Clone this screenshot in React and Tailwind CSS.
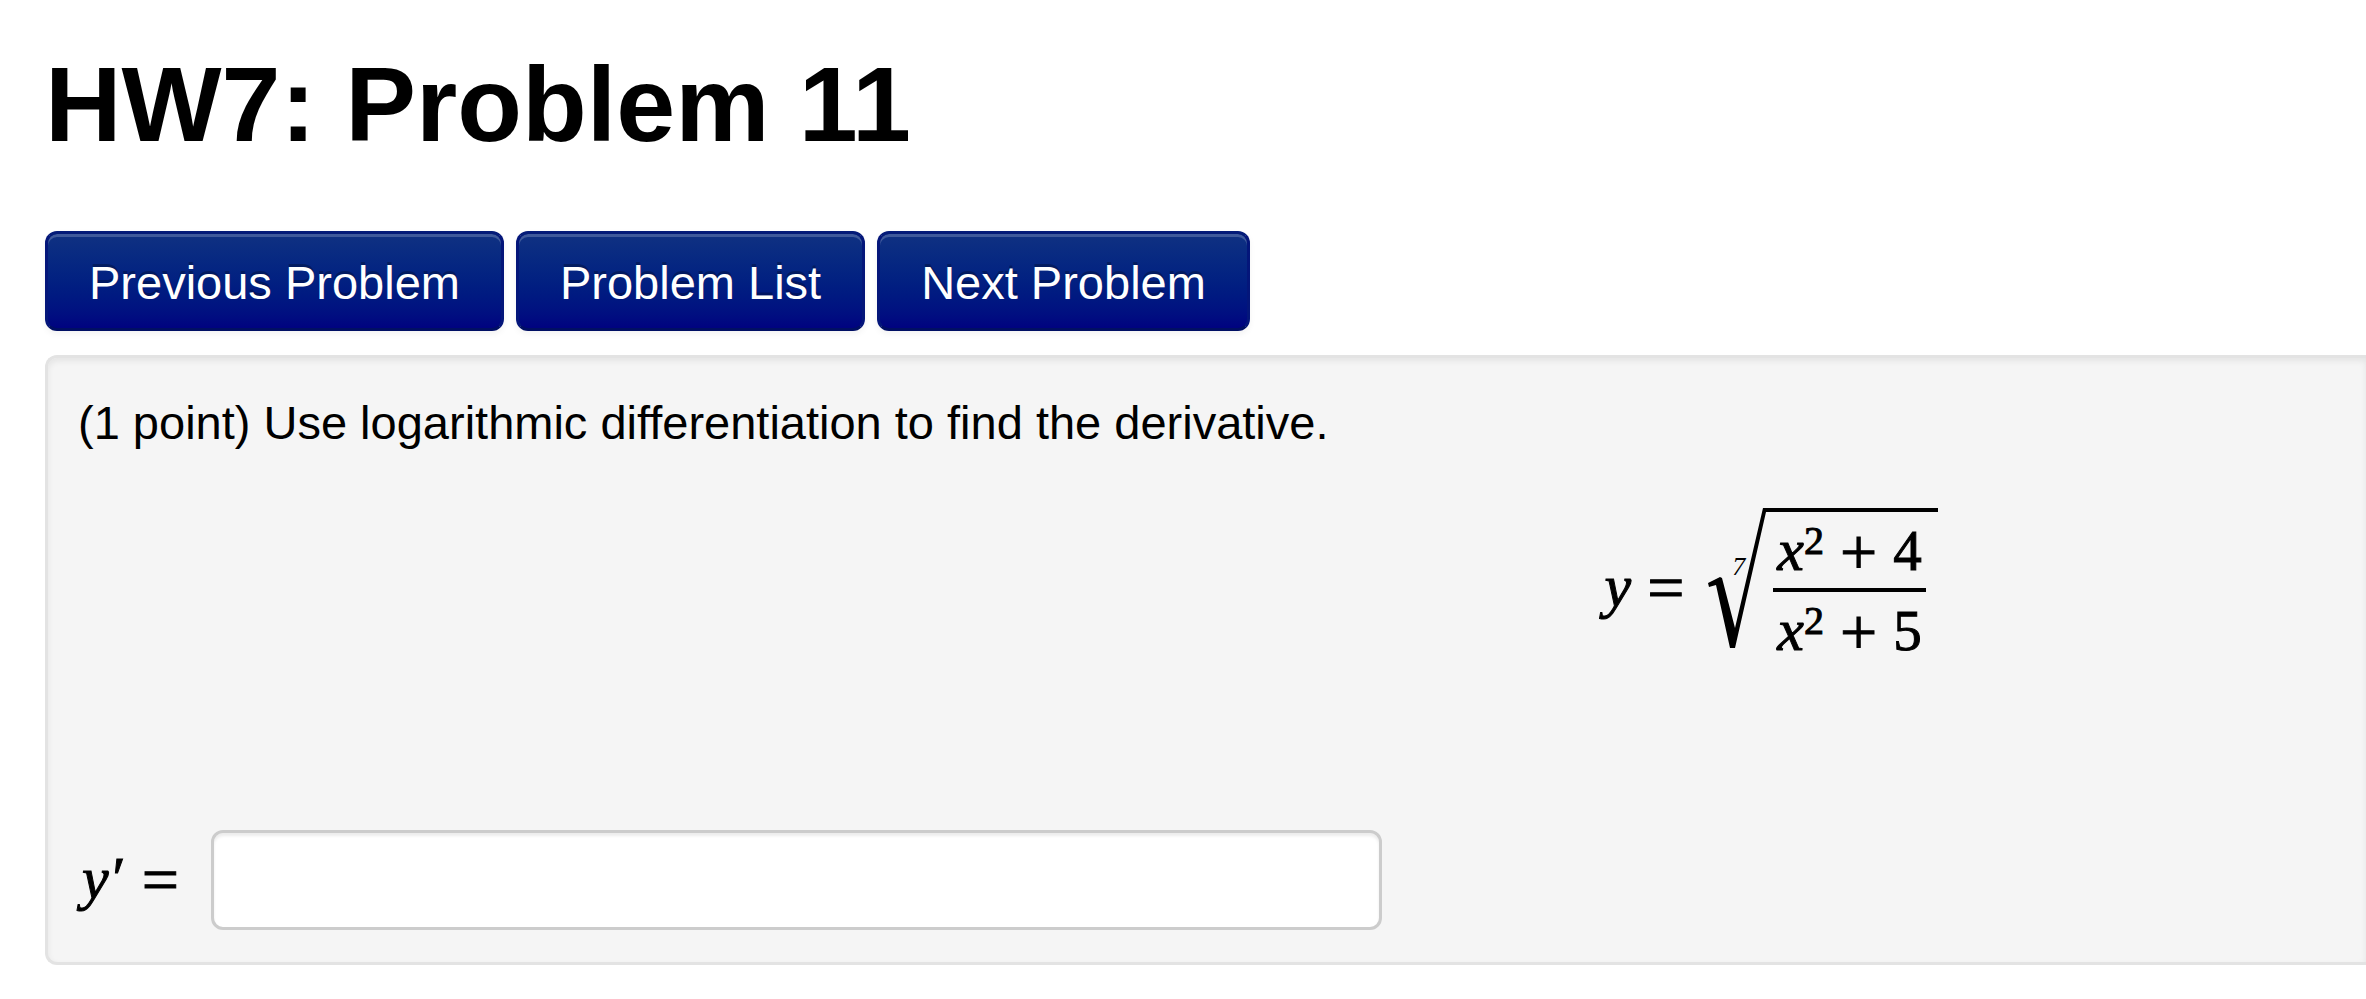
import React from "react";

const NAV_LINKS = ["Previous Problem", "Problem List", "Next Problem"];

function NavButton({ children }) {
  return (
    <button
      type="button"
      className="h-[100px] px-[41px] pt-1 rounded-xl border-[3px] border-t-[#041b78] border-x-[#04167a] border-b-[#000f63] bg-linear-to-b from-[#113282] to-[#000080] bg-origin-border text-white text-[47px] leading-[64px] whitespace-nowrap [text-shadow:0_-3px_0_rgba(0,0,0,0.25)] shadow-[inset_0_3px_0_rgba(255,255,255,0.2),0_3px_6px_rgba(0,0,0,0.05)]"
    >
      {children}
    </button>
  );
}

function Operator({ children }) {
  return (
    <span className="relative top-1 text-[66px] leading-[0]">{children}</span>
  );
}

function Variable({ children }) {
  return <i className="text-[60px] leading-[76px]">{children}</i>;
}

function Term({ constant }) {
  return (
    <div className="flex items-baseline h-[76px] leading-[76px] pl-1">
      <Variable>x</Variable>
      <sup className="text-[40px] leading-[0] -top-4 mr-4">2</sup>
      <Operator>+</Operator>
      <span className="ml-4">{constant}</span>
    </div>
  );
}

function Equation() {
  return (
    <div className="flex items-start font-['Liberation_Serif',serif] text-[57px] [-webkit-text-stroke:1px_#000]">
      <div className="flex items-baseline gap-4 mt-10 pr-6">
        <Variable>y</Variable>
        <Operator>=</Operator>
      </div>
      <div className="relative">
        <svg width="59" height="141" viewBox="0 0 59 141" fill="#000">
          <path d="M0 75 L12 69 L14 70 L27 120 L55 0 L59 0 L59 4 L58 4 L27 140 L22 140 L8 77 L1 79 Z" />
        </svg>
        <i className="absolute left-6 top-[44px] text-[26px] leading-[30px] [-webkit-text-stroke:0]">
          7
        </i>
      </div>
      <div className="border-t-4 border-black pl-[6px] pr-3">
        <div className="border-b-4 border-black pr-1">
          <Term constant="4" />
        </div>
        <Term constant="5" />
      </div>
    </div>
  );
}

export default function App() {
  return (
    <main className="min-h-screen bg-white pl-[45px] pt-[44px] pb-[35px] font-['Liberation_Sans',sans-serif] text-black">
      <h1 className="text-[106px] leading-[120px] font-bold">HW7: Problem 11</h1>

      <nav className="flex gap-3 mt-[67px]">
        {NAV_LINKS.map((label) => (
          <NavButton key={label}>{label}</NavButton>
        ))}
      </nav>

      <section className="mt-6 rounded-l-xl border-[3px] border-r-0 border-[#e3e3e3] bg-[#f5f5f5] pl-[30px] pt-[33px] pb-8 shadow-[inset_0_3px_6px_rgba(0,0,0,0.07)]">
        <p className="text-[47px] leading-[64px]">
          (1 point) Use logarithmic differentiation to find the derivative.
        </p>

        {/* display equation, right of the middle */}
        <div className="flex justify-center pl-[48%] mt-[53px]">
          <Equation />
        </div>

        <div className="flex items-center mt-[162px]">
          <label
            htmlFor="answer"
            className="flex items-baseline gap-5 w-[133px] pl-1 pb-1 font-['Liberation_Serif',serif] text-[57px] [-webkit-text-stroke:1px_#000]"
          >
            <Variable>y′</Variable>
            <Operator>=</Operator>
          </label>
          <input
            id="answer"
            type="text"
            className="w-[1171px] h-[100px] px-4 rounded-xl border-[3px] border-[#cccccc] bg-white text-[47px] outline-none shadow-[inset_0_3px_3px_rgba(0,0,0,0.075)]"
          />
        </div>
      </section>
    </main>
  );
}
